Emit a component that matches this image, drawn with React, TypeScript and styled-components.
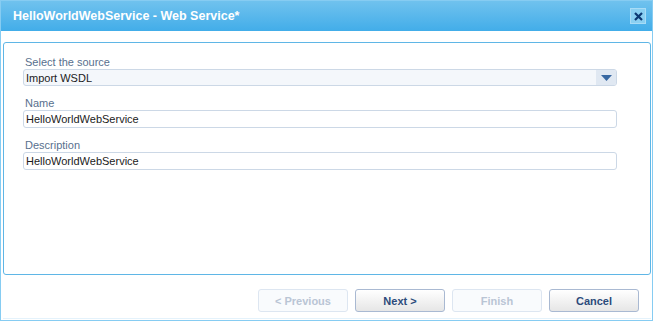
import React from 'react';
import styled, { createGlobalStyle } from 'styled-components';

const GlobalStyle = createGlobalStyle`
  html, body {
    margin: 0;
    padding: 0;
    background: #fff;
  }
  body {
    font-family: "Liberation Sans", Arial, sans-serif;
    font-size: 11px;
  }
`;

const Window = styled.div`
  box-sizing: border-box;
  width: 653px;
  height: 321px;
  border: 1px solid #86ccf2;
  background: #fff;
  display: flex;
  flex-direction: column;
`;

const TitleBar = styled.div`
  height: 30px;
  flex: none;
  display: flex;
  align-items: center;
  justify-content: space-between;
  padding: 0 6px 0 12px;
  background: linear-gradient(to bottom, #70c2ee 0%, #42ade9 100%);
`;

const Title = styled.div`
  color: #fff;
  font-weight: bold;
  font-size: 12.5px;
`;

const CloseButton = styled.button`
  box-sizing: border-box;
  width: 16px;
  height: 16px;
  padding: 0;
  border: 1px solid #a8dcf6;
  background: #8ad0f2;
  display: flex;
  align-items: center;
  justify-content: center;
  cursor: pointer;
`;

const Body = styled.div`
  flex: 1;
  display: flex;
  flex-direction: column;
  padding: 11px 1px 0 2px;
`;

const Panel = styled.div`
  box-sizing: border-box;
  height: 233px;
  border: 1px solid #5fb6e6;
  border-radius: 3px;
  padding: 12px 33px 0 19px;
  display: flex;
  flex-direction: column;
`;

const Field = styled.div`
  display: flex;
  flex-direction: column;
  margin-bottom: 10px;
`;

const Label = styled.label`
  color: #58708e;
  font-size: 11px;
  line-height: 14px;
  padding-left: 2px;
`;

const TextBox = styled.div<{ $select?: boolean }>`
  box-sizing: border-box;
  height: ${p => (p.$select ? '17px' : '18px')};
  border: 1px solid #ccd8e6;
  border-radius: 3px;
  background: ${p => (p.$select ? '#f4f7fb' : '#fff')};
  color: #1b1b1b;
  font-size: 11px;
  display: flex;
  align-items: center;
  justify-content: space-between;
  padding-left: 2px;
  overflow: hidden;
`;

const Arrow = styled.div`
  width: 20px;
  height: 100%;
  background: #e0e8f2;
  display: flex;
  align-items: center;
  justify-content: center;
`;

const Footer = styled.div`
  flex: 1;
  display: flex;
  align-items: flex-start;
  justify-content: flex-end;
  gap: 7px;
  padding: 14px 12px 0 0;
  border-bottom: 1px solid #e4f2fb;
  margin-bottom: 1px;
`;

const Button = styled.button<{ $disabled?: boolean }>`
  box-sizing: border-box;
  width: 90px;
  height: 23px;
  border-radius: 3px;
  font-family: "Liberation Sans", Arial, sans-serif;
  font-size: 11px;
  font-weight: bold;
  border: 1px solid ${p => (p.$disabled ? '#dde6f1' : '#a9b9d2')};
  color: ${p => (p.$disabled ? '#b9c5d5' : '#2c4b7b')};
  background: ${p =>
    p.$disabled ? '#f9fbfd' : 'linear-gradient(to bottom, #ffffff 0%, #e6e6e6 100%)'};
`;

export default function App() {
  return (
    <>
      <GlobalStyle />
      <Window>
        <TitleBar>
          <Title>HelloWorldWebService - Web Service*</Title>
          <CloseButton aria-label="Close">
            <svg width="9" height="9" viewBox="0 0 9 9">
              <path d="M1 1 L8 8 M8 1 L1 8" stroke="#0d3a74" strokeWidth="2.2" />
            </svg>
          </CloseButton>
        </TitleBar>
        <Body>
          <Panel>
            <Field>
              <Label>Select the source</Label>
              <TextBox $select>
                <span>Import WSDL</span>
                <Arrow>
                  <svg width="11" height="6" viewBox="0 0 11 6">
                    <path d="M0 0 H11 L5.5 6 Z" fill="#3868a2" />
                  </svg>
                </Arrow>
              </TextBox>
            </Field>
            <Field>
              <Label>Name</Label>
              <TextBox>HelloWorldWebService</TextBox>
            </Field>
            <Field>
              <Label>Description</Label>
              <TextBox>HelloWorldWebService</TextBox>
            </Field>
          </Panel>
          <Footer>
            <Button $disabled disabled>&lt; Previous</Button>
            <Button>Next &gt;</Button>
            <Button $disabled disabled>Finish</Button>
            <Button>Cancel</Button>
          </Footer>
        </Body>
      </Window>
    </>
  );
}
